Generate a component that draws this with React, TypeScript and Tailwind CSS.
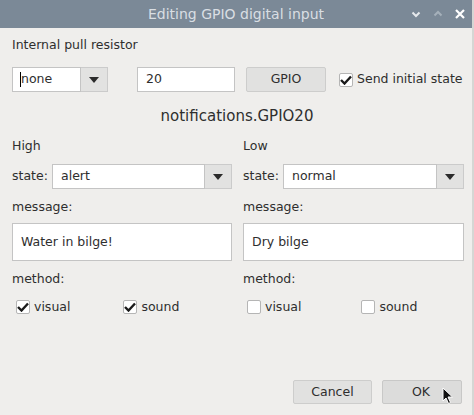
import React from "react";

const Arrow = () => (
  <svg width="10" height="6" viewBox="0 0 10 6">
    <path d="M0 0 L10 0 L5 6 Z" fill="#2b2b2b" />
  </svg>
);

const Check = () => (
  <svg width="12" height="10" viewBox="0 0 12 10">
    <path d="M1 5 L4.5 8.5 L11 1.5" stroke="#1a1a1a" strokeWidth="2.4" fill="none" />
  </svg>
);

function Checkbox({ checked, label }: { checked: boolean; label: string }) {
  return (
    <div className="flex items-center gap-[4px] whitespace-nowrap">
      <div className="w-[14px] h-[14px] shrink-0 bg-white border border-[#b5b5b5] rounded-[2px] flex items-center justify-center">
        {checked && <Check />}
      </div>
      <span>{label}</span>
    </div>
  );
}

function Combo({ value, fieldW, cursor }: { value: string; fieldW: string; cursor?: boolean }) {
  return (
    <div className="flex h-[25px]">
      <div className={`${fieldW} bg-white border border-[#c4c4c4] flex items-center pl-[8px]`}>
        {cursor && <span className="w-px h-[15px] bg-black -ml-[1px]" />}
        <span>{value}</span>
      </div>
      <div className="w-[27px] bg-[#e2e2e1] border border-l-0 border-[#cbcbcb] flex items-center justify-center">
        <Arrow />
      </div>
    </div>
  );
}

function Column({
  title,
  state,
  message,
  visual,
  sound,
  soundOffset,
}: {
  title: string;
  state: string;
  message: string;
  visual: boolean;
  sound: boolean;
  soundOffset: string;
}) {
  return (
    <div className="flex flex-col">
      <div className="h-[16px] leading-[16px] mt-[1px]">{title}</div>
      <div className="flex items-center mt-[10px] h-[25px]">
        <span className="w-[40px]">state:</span>
        <div className="flex flex-1 h-[25px]">
          <div className="flex-1 bg-white border border-[#c4c4c4] flex items-center pl-[8px]">{state}</div>
          <div className="w-[27px] bg-[#e2e2e1] border border-l-0 border-[#cbcbcb] flex items-center justify-center">
            <Arrow />
          </div>
        </div>
      </div>
      <div className="h-[16px] leading-[16px] mt-[10px]">message:</div>
      <div className="h-[38px] mt-[8px] bg-white border border-[#c4c4c4] flex items-center pl-[8px]">
        {message}
      </div>
      <div className="h-[16px] leading-[16px] mt-[10px]">method:</div>
      <div className="flex items-center mt-[11px] pl-[4px]">
        <Checkbox checked={visual} label="visual" />
        <div className={soundOffset}>
          <Checkbox checked={sound} label="sound" />
        </div>
      </div>
    </div>
  );
}

export default function App() {
  return (
    <div
      className="w-[474px] h-[415px] bg-[#efeeec] flex flex-col text-[12.5px] text-[#2e2e2e] overflow-hidden border-r-2 border-[#d6d6d4]"
      style={{ fontFamily: '"DejaVu Sans", "Liberation Sans", sans-serif' }}
    >
      <div className="h-[28px] shrink-0 bg-[#7b8997] grid grid-cols-[1fr_auto_1fr] items-center">
        <div />
        <div className="text-[14px] text-[#d9dee3]">Editing GPIO digital input</div>
        <div className="flex justify-end items-center gap-[10px] pr-[6px]">
          <svg width="12" height="12" viewBox="0 0 12 12">
            <path d="M2.5 4.5 L6 8 L9.5 4.5" stroke="#e6e9ec" strokeWidth="2" fill="none" />
          </svg>
          <svg width="12" height="12" viewBox="0 0 12 12">
            <path d="M2.5 7.5 L6 4 L9.5 7.5" stroke="#a5b0ba" strokeWidth="2" fill="none" />
          </svg>
          <svg width="12" height="12" viewBox="0 0 12 12">
            <path d="M2 2 L10 10 M10 2 L2 10" stroke="#ffffff" strokeWidth="2.2" fill="none" />
          </svg>
        </div>
      </div>

      <div className="flex flex-col pl-[12px] pr-[8px] flex-1">
        <div className="mt-[9px] h-[16px] leading-[16px]">Internal pull resistor</div>

        <div className="flex items-center mt-[14px] h-[25px]">
          <Combo value="none" fieldW="w-[69px]" cursor />
          <div className="ml-[29px] w-[98px] h-[25px] bg-white border border-[#c4c4c4] flex items-center pl-[8px]">
            20
          </div>
          <div className="ml-[11px] w-[80px] h-[25px] bg-[#e1e1e0] border border-[#cdcdcc] rounded-[2px] flex items-center justify-center">
            GPIO
          </div>
          <div className="ml-[13px]">
            <Checkbox checked label="Send initial state" />
          </div>
        </div>

        <div className="mt-[15px] text-center text-[15px] leading-[18px] pr-[2px]">notifications.GPIO20</div>

        <div className="grid grid-cols-[220px_221px] gap-[11px] mt-[12px]">
          <Column title="High" state="alert" message="Water in bilge!" visual sound soundOffset="ml-[53px]" />
          <Column title="Low" state="normal" message="Dry bilge" visual={false} sound={false} soundOffset="ml-[60px]" />
        </div>

        <div className="flex justify-end mt-auto mb-[11px] gap-[10px] pr-[2px]">
          <div className="w-[79px] h-[24px] bg-[#e1e1e0] border border-[#cdcdcc] rounded-[2px] flex items-center justify-center">
            Cancel
          </div>
          <div className="w-[80px] h-[24px] bg-[#dcdcdb] border border-[#c8c8c7] rounded-[2px] flex items-center justify-center relative">
            <span className="-ml-[2px]">OK</span>
            <svg className="absolute left-[59px] top-[6px]" width="12" height="18" viewBox="0 0 12 18">
              <path d="M1 1 L1 14 L4 11 L6.5 16.5 L8.5 15.5 L6 10 L10.5 10 Z" fill="#111" stroke="#fff" strokeWidth="1" />
            </svg>
          </div>
        </div>
      </div>
    </div>
  );
}
